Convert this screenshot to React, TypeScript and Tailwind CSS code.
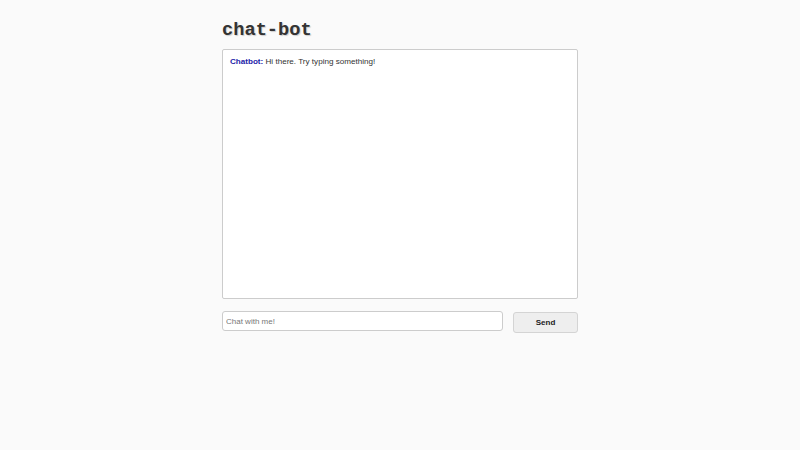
import { useState } from 'react';

type Message = { from: 'bot' | 'user'; text: string };

export default function App() {
  const [messages, setMessages] = useState<Message[]>([
    { from: 'bot', text: 'Hi there. Try typing something!' },
  ]);
  const [input, setInput] = useState('');

  const send = (e: React.FormEvent) => {
    e.preventDefault();
    if (!input.trim()) return;
    setMessages(m => [...m, { from: 'user', text: input }]);
    setInput('');
  };

  return (
    <div className="min-h-[450px] bg-[#fafafa] font-['Liberation_Sans',Arial,sans-serif] text-[#333]">
      <div className="mx-auto w-[356px] pt-[20px]">
        <h1 className="font-['Liberation_Mono','Courier_New',monospace] text-[18.7px] leading-[21px] font-bold text-[#333] [text-shadow:1px_1px_1px_#ccc]">
          chat-bot
        </h1>

        <div className="mt-[8px] h-[250px] overflow-y-auto rounded-[2px] border border-[#cccccc] bg-white p-[7px] text-[8.1px] leading-[10px]">
          {messages.map((m, i) => (
            <div key={i}>
              <span className={m.from === 'bot' ? 'font-bold text-[#1c1ca8]' : 'font-bold text-[#333]'}>
                {m.from === 'bot' ? 'Chatbot:' : 'You:'}
              </span>{' '}
              <span className="text-[#333]">{m.text}</span>
            </div>
          ))}
        </div>

        <form onSubmit={send} className="mt-[12px] flex items-start gap-[10px]">
          <input
            type="text"
            className="h-[20px] w-[281px] rounded-[3px] border border-[#cccccc] bg-white px-[3px] text-[8px] text-[#333] outline-none placeholder:text-[#777]"
            placeholder="Chat with me!"
            value={input}
            onChange={e => setInput(e.target.value)}
          />
          <button
            type="submit"
            className="mt-[1px] h-[21px] w-[65px] rounded-[3px] border border-[#d4d4d4] bg-[#eeeeee] text-[8px] font-bold text-[#222] hover:bg-[#e4e4e4]"
          >
            Send
          </button>
        </form>
      </div>
    </div>
  );
}
